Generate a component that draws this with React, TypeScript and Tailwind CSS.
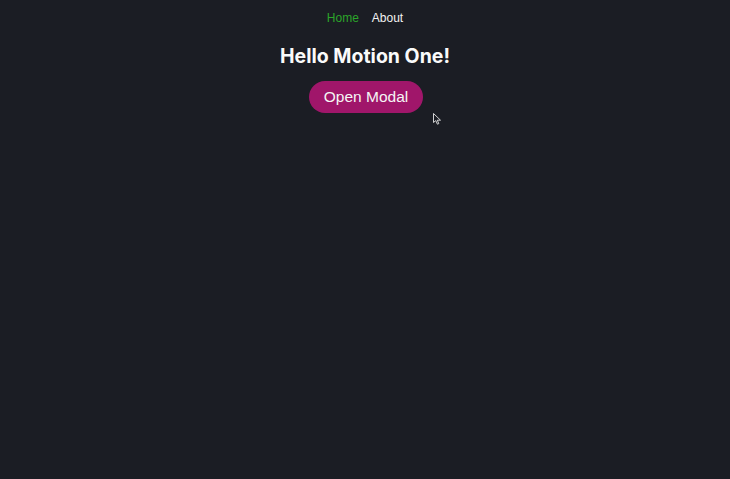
import { useState } from 'react'

function Nav() {
  return (
    <nav className="flex justify-center gap-[13px] pt-[11px] font-['Liberation_Sans',sans-serif] text-[12px] leading-[14px]">
      <a href="#" className="text-[#2ca52a]">Home</a>
      <a href="#" className="text-[#f2f2f2]">About</a>
    </nav>
  )
}

function Pointer() {
  return (
    <svg className="absolute left-[433px] top-[113px]" width="9" height="12" viewBox="0 0 9 12">
      <path d="M0.5 0.5 L0.5 9.5 L2.8 7.6 L4.4 11.2 L5.8 10.6 L4.3 7.2 L7.5 7.2 Z" fill="#1b1d24" stroke="#e5e5e5" strokeWidth="0.9" strokeLinejoin="round" />
    </svg>
  )
}

export default function App() {
  const [open, setOpen] = useState(false)

  return (
    <main className="relative min-h-[479px] bg-[#1b1d24] font-['Inter',sans-serif] text-white">
      <Nav />
      <div className="flex flex-col items-center">
        <h1 className="mt-[17px] text-[19.5px] font-bold leading-[28px] text-[#fafafa]">Hello Motion One!</h1>
        <button
          onClick={() => setOpen(!open)}
          className="ml-[2px] mt-[11px] h-[32px] w-[114px] rounded-full bg-[#a0166a] font-['Liberation_Sans',sans-serif] text-[15.5px] text-[#f5f5f5]"
        >
          Open Modal
        </button>
      </div>
      <Pointer />
    </main>
  )
}
